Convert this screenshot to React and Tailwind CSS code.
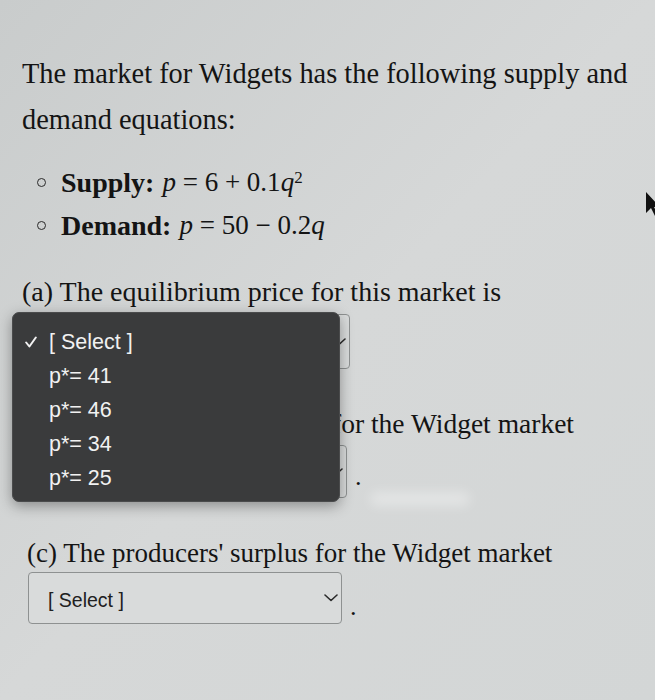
import React from "react";

const Chevron = () => (
  <svg width="14" height="8" viewBox="0 0 14 8" className="shrink-0">
    <polyline
      points="1,1 7,6.5 13,1"
      fill="none"
      stroke="#2a2a2a"
      strokeWidth="1.6"
      strokeLinecap="round"
      strokeLinejoin="round"
    />
  </svg>
);

const Check = () => (
  <svg width="12" height="12" viewBox="0 0 12 12">
    <polyline
      points="1.2,6.5 4.4,10.5 10.8,1.5"
      fill="none"
      stroke="#f2f2f2"
      strokeWidth="2"
      strokeLinecap="round"
      strokeLinejoin="round"
    />
  </svg>
);

const SelectBox = ({ width, height, label = "", dot = "pb-[8px]" }) => (
  <div className="flex items-end gap-[8px]">
    <div
      className={`flex items-center justify-between rounded-[4px] border border-[#8e9191] bg-[#d9dbdb] pl-[19px] pr-[3px] ${width} ${height}`}
    >
      <span className="pt-[5px] font-['Liberation_Sans',sans-serif] text-[19.5px] text-[#202020]">
        {label}
      </span>
      <Chevron />
    </div>
    <span className={`text-[26px] leading-none ${dot}`}>.</span>
  </div>
);

const options = ["[ Select ]", "p*= 41", "p*= 46", "p*= 34", "p*= 25"];

const Menu = () => (
  <div className="absolute left-[-10px] top-[-2px] z-10 w-[328px] rounded-[7px] border border-[#4a4b4c] bg-[#3a3b3c] pb-[6px] pt-[12px] shadow-[0_4px_14px_rgba(0,0,0,0.35)]">
    {options.map((opt, i) => (
      <div
        key={opt}
        className="flex h-[34px] items-center pl-[12px] font-['Liberation_Sans',sans-serif] text-[21.5px] text-[#f1f1f1]"
      >
        <span className="flex w-[24px] items-center">{i === 0 && <Check />}</span>
        <span>{opt}</span>
      </div>
    ))}
  </div>
);

export default function App() {
  return (
    <div className="relative min-h-[700px] w-full overflow-hidden bg-gradient-to-br from-[#c9cccc] via-[#d6d8d8] to-[#d3d6d6] pl-[22px] pt-[51px] font-['Liberation_Serif',serif] text-[#141414]">
      {/* Intro */}
      <p className="text-[28.4px] leading-[46px]">
        The market for Widgets has the following supply and
        <br />
        demand equations:
      </p>

      <ul className="mt-[18px] pl-[15px]">
        <li className="flex items-center text-[28px] leading-[43px]">
          <span className="mr-[15px] h-[9px] w-[9px] rounded-full border-[1.5px] border-[#2a2a2a]" />
          <b>Supply:</b>
          <span className="ml-[8px] text-[27px]">
            <i>p</i> = 6 + 0.1<i>q</i>
            <sup className="text-[17px]">2</sup>
          </span>
        </li>
        <li className="flex items-center text-[28px] leading-[43px]">
          <span className="mr-[15px] h-[9px] w-[9px] rounded-full border-[1.5px] border-[#2a2a2a]" />
          <b>Demand:</b>
          <span className="ml-[8px] text-[27px]">
            <i>p</i> = 50 − 0.2<i>q</i>
          </span>
        </li>
      </ul>

      {/* (a) */}
      <p className="mt-[26px] text-[28px] leading-[38px]">
        (a) The equilibrium price for this market is
      </p>
      <div className="relative mt-[3px]">
        <div className="flex">
          <div className="flex h-[55px] w-[328px] items-center justify-end rounded-[4px] border border-[#8e9191] bg-[#d9dbdb] pr-[3px]">
            <Chevron />
          </div>
        </div>
        <Menu />
      </div>

      {/* (b) — the start of the question is hidden under the open menu */}
      <p className="mt-[36px] pl-[310px] text-[27.5px] leading-[38px]">
        for the Widget market
      </p>
      <div className="mt-[2px]">
        <SelectBox width="w-[325px]" height="h-[53px]" />
      </div>

      {/* (c) */}
      <div className="ml-[5px] mt-[36px]">
        <p className="text-[27px] leading-[38px]">
          (c) The producers' surplus for the Widget market
        </p>
        <div className="ml-[1px]">
          <SelectBox
            width="w-[314px]"
            height="h-[52px]"
            label="[ Select ]"
            dot="pb-[4px]"
          />
        </div>
      </div>

      {/* screen glare */}
      <div className="pointer-events-none absolute left-[370px] top-[492px] h-[14px] w-[100px] rounded-full bg-white/35 blur-[6px]" />

      {/* mouse pointer */}
      <svg
        className="absolute left-[645px] top-[191px]"
        width="14"
        height="26"
        viewBox="0 0 14 26"
      >
        <path d="M1 1 L1 22 L6 17 L10 25 L13 24 L9 16 L15 16 Z" fill="#111" />
      </svg>
    </div>
  );
}
